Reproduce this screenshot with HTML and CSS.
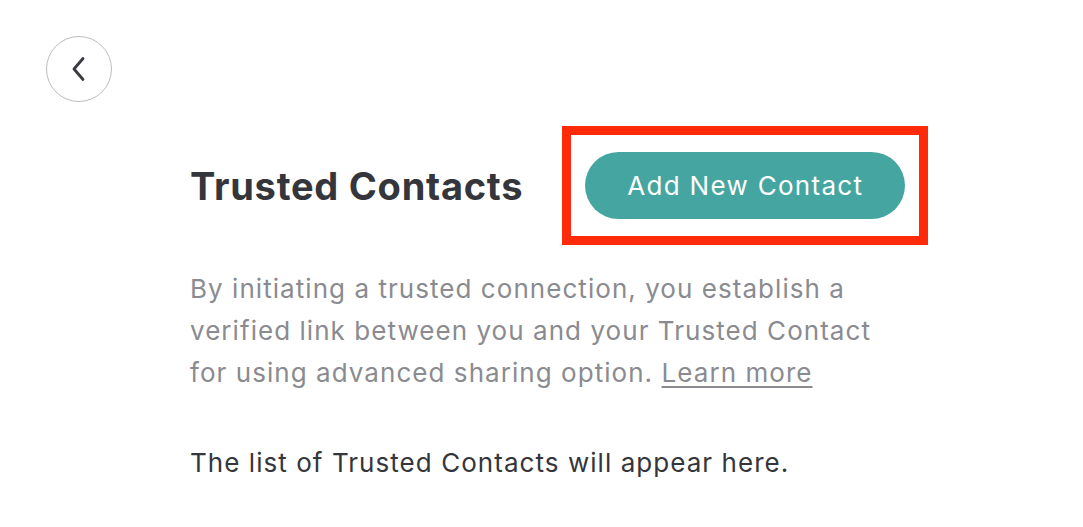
FILE: index.html
```html
<!DOCTYPE html>
<html>
<head>
<meta charset="utf-8">
<link rel="stylesheet" href="styles.css">
</head>
<body>
<div class="page">
  <div class="back">
    <svg width="20" height="28" viewBox="0 0 20 28"><path d="M14 3.5 L5 14 L14 24.5" fill="none" stroke="#3a3b40" stroke-width="2.8" stroke-linecap="round" stroke-linejoin="round"/></svg>
  </div>
  <div class="content">
    <div class="head">
      <h1 class="title">Trusted Contacts</h1>
      <div class="highlight">
        <button class="add">Add New Contact</button>
      </div>
    </div>
    <p class="desc">By initiating a trusted connection, you establish a verified link between you and your Trusted Contact for using advanced sharing option. <a class="more" href="#">Learn more</a></p>
    <p class="empty">The list of Trusted Contacts will appear here.</p>
  </div>
</div>
</body>
</html>
```
FILE: styles.css
```css
html, body {
  margin: 0;
  padding: 0;
  background: #ffffff;
}
body {
  font-family: Inter, "Noto Sans", sans-serif;
}
.page {
  position: relative;
  width: 1083px;
  height: 527px;
  overflow: hidden;
}
.back {
  position: absolute;
  left: 46px;
  top: 36px;
  width: 64px;
  height: 64px;
  border: 1.5px solid #bdbdbd;
  border-radius: 50%;
  display: flex;
  align-items: center;
  justify-content: center;
}
.content {
  padding: 126px 0 0 190px;
  display: flex;
  flex-direction: column;
}
.head {
  display: flex;
  align-items: center;
  gap: 39px;
}
.title {
  margin: 0;
  font-size: 38px;
  font-weight: 700;
  color: #34363b;
  letter-spacing: 0.75px;
}
.highlight {
  border: 9px solid #ff2a0a;
  padding: 17px 14px 17px 14px;
  display: flex;
}
.add {
  width: 320px;
  height: 67px;
  border: none;
  border-radius: 34px;
  background: #45a6a1;
  color: #ffffff;
  font-family: Inter, "Noto Sans", sans-serif;
  font-size: 26px;
  font-weight: 400;
  letter-spacing: 1.3px;
  padding: 0;
}
.desc {
  margin: 23px 0 0 0;
  width: 700px;
  font-size: 26px;
  line-height: 42px;
  letter-spacing: 1.05px;
  color: #8a8b90;
}
.more {
  color: #8a8b90;
  text-decoration: underline;
  text-underline-offset: 4px;
}
.empty {
  margin: 48px 0 0 0;
  font-size: 26px;
  line-height: 42px;
  letter-spacing: 1.05px;
  color: #34363b;
}
```
